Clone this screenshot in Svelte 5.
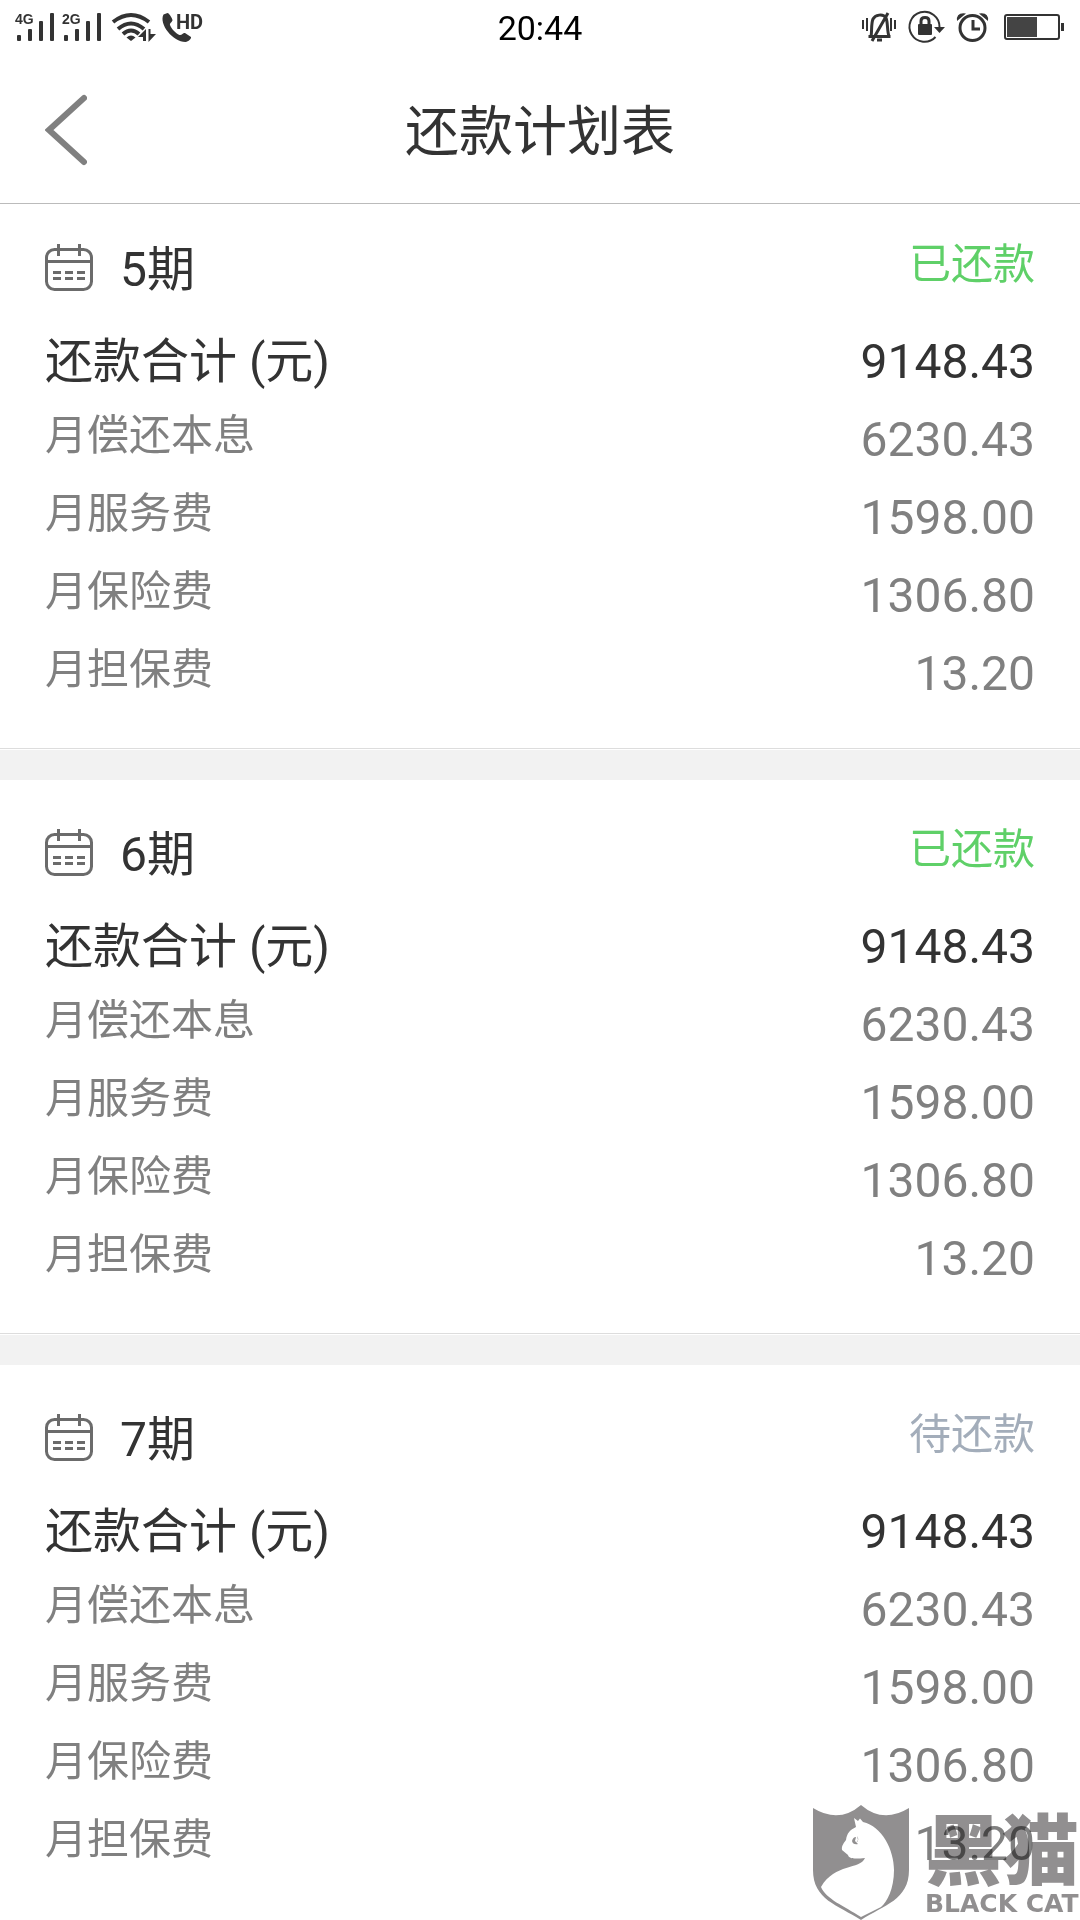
<script>
  const periods = [5, 6, 7].map((n) => ({
    n,
    paid: n < 7,
    total: '9148.43',
    items: [
      ['月偿还本息', '6230.43'],
      ['月服务费', '1598.00'],
      ['月保险费', '1306.80'],
      ['月担保费', '13.20']
    ]
  }));
</script>

<div class="page">
  <div class="status">
    <div class="group left">
      <svg width="220" height="48" viewBox="0 0 220 48" fill="#333" aria-hidden="true">
        <rect x="17" y="35" width="4" height="6" rx="1" />
        <rect x="28" y="29" width="4" height="12" rx="1" />
        <rect x="39" y="21" width="4" height="20" rx="1" />
        <rect x="50" y="13" width="4" height="28" rx="1" />
        <rect x="64" y="35" width="4" height="6" rx="1" />
        <rect x="75" y="29" width="4" height="12" rx="1" />
        <rect x="86" y="21" width="4" height="20" rx="1" />
        <rect x="97" y="13" width="4" height="28" rx="1" />
        <text x="15" y="24" class="net">4G</text>
        <text x="62" y="24" class="net">2G</text>
        <g fill="none" stroke="#333" stroke-width="4">
          <path d="M113 22Q131 8 149 22" />
          <path d="M118 29Q131 18 144 29" />
          <path d="M123 34Q131 27 139 34" />
        </g>
        <path d="M126.500 37.500Q131 33.500 135.500 37.500L131 41z" />
        <path d="M138 37L146 29V41H143V37zM148.500 42V29H150.500V34H156z" />
        <path d="M163.500 14.500L167.500 13C169 13 172 18 172.500 20C172.500 22 169.500 23 170 25C171.500 29 175.500 33 179.500 35C182 35.500 183 32.500 185 33L191 37C191.500 39 188.500 41.500 185.500 42C173 42 158.500 24 163.500 14.500z" />
        <text x="176" y="29" class="hd">HD</text>
      </svg>
    </div>
    <time>20:44</time>
    <div class="group right">
      <svg width="220" height="48" viewBox="860 0 220 48" fill="none" stroke="#333" stroke-width="3" aria-hidden="true">
        <path d="M863 20V29M867 18V31M891 18V31M895 20V29" stroke-width="2" />
        <path d="M868.500 36.500H890.500M871 36C872 33 871 23 873 19C875 15 883 13 886 18C888 22 887 32 889 36M872 41L888 13" />
        <path d="M877 40H882" />
        <path d="M935.500 37A15 15 0 1 1 939.500 27" stroke-width="2" />
        <path d="M934 27H945L939.500 33z" fill="#333" stroke="none" />
        <rect x="918" y="24" width="14" height="11" rx="1" fill="#333" stroke="none" />
        <path d="M921 25V21Q921 17.500 925 17.500Q929 17.500 929 21V25" />
        <circle cx="972.500" cy="28" r="12.500" />
        <path d="M973 20V29H980" />
        <path d="M957 21Q956 12 966 13.500zM988 21Q989 12 979 13.500z" fill="#333" stroke="none" />
        <rect x="1005" y="15" width="54" height="24" rx="2" stroke-width="2" />
        <rect x="1007" y="17" width="30" height="20" fill="#444" stroke="none" />
        <rect x="1061" y="23" width="3" height="8" fill="#333" stroke="none" />
      </svg>
    </div>
  </div>

  <header>
    <button aria-label="返回">
      <svg width="42" height="72" viewBox="0 0 42 72" fill="none" stroke="#808080" stroke-width="6" stroke-linecap="round" aria-hidden="true">
        <path d="M39 4L4 36L39 68" />
      </svg>
    </button>
    <h1>还款计划表</h1>
  </header>

  <main>
    {#each periods as p}
      <section>
        <div class="head">
          <svg width="48" height="48" viewBox="0 0 48 48" fill="none" stroke="#6b6b6b" stroke-width="3" aria-hidden="true">
            <rect x="1.500" y="5.500" width="45" height="40" rx="8" />
            <path d="M1 17.500H47M13.500 0V12M34.500 0V12M8 28.500H16M20 28.500H28M32 28.500H40M8 34.500H16M20 34.500H28M32 34.500H40" />
          </svg>
          <h2>{p.n}期</h2>
          <span class="state" class:paid={p.paid}>{p.paid ? '已还款' : '待还款'}</span>
        </div>
        <dl>
          <div class="total"><dt>还款合计 (元)</dt><dd>{p.total}</dd></div>
          {#each p.items as [label, amount]}
            <div><dt>{label}</dt><dd>{amount}</dd></div>
          {/each}
        </dl>
      </section>
    {/each}
  </main>

  <div class="mark">
    <svg width="98" height="116" viewBox="0 0 98 116" aria-hidden="true">
      <path fill="#918f90" d="M1 4Q27 20 49 1Q71 20 97 4V66C97 96 72 101 49 116C26 101 1 96 1 66z" />
      <path fill="#fff" d="M42 14L46 17L48 14.500L51 18C70 22 82 46 82 66C82 85 75 98 69 103L49 113C32 102 14 95 9 83C23 59 48 66 53 54C43 55 37 55 36 51L30 46Q29 42 34 36C35 29 38 26 44 23z" />
      <path fill="#918f90" d="M40 37Q41 33 44 33L43 37L46 40Q41 41 40 37zM45 32Q48 36 44 39L46 36z" />
    </svg>
    <div class="words">
      <span class="cn">黑猫</span>
      <span class="en">BLACK CAT</span>
    </div>
  </div>
</div>

<style>
  :global(body) {
    margin: 0;
    background: #fff;
  }
  .page {
    position: relative;
    overflow: hidden;
    font-family: Roboto, 'Noto Sans CJK SC', sans-serif;
    color: #333;
  }
  .status {
    display: grid;
    grid-template-columns: 1fr auto 1fr;
    height: 56px;
  }
  .right {
    justify-self: end;
  }
  .net {
    font: bold 14px 'Liberation Sans', sans-serif;
  }
  .hd {
    font: bold 20px Roboto, sans-serif;
  }
  time {
    font-size: 34px;
    line-height: 56px;
    color: #000;
  }
  header {
    display: grid;
    grid-template-columns: 1fr auto 1fr;
    align-items: center;
    height: 147px;
    border-bottom: 1px solid #bbb;
  }
  button {
    justify-self: start;
    display: flex;
    margin-left: 45px;
    padding: 0;
    border: 0;
    background: none;
  }
  h1,
  h2 {
    margin: 0;
    font-weight: 400;
  }
  h1 {
    padding-bottom: 5px;
    font-size: 54px;
  }
  section {
    padding: 24px 45px 35px;
    border-bottom: 1px solid #ddd;
  }
  section:first-child {
    padding-top: 15px;
  }
  section:last-child {
    padding-bottom: 37px;
    border-bottom: 0;
  }
  section + section::before {
    content: '';
    display: block;
    height: 30px;
    margin: -23px -45px 24px;
    background: #f2f2f2;
  }
  .head {
    display: flex;
    align-items: center;
    height: 98px;
    margin-bottom: 6px;
  }
  h2 {
    flex: 1;
    margin-left: 27px;
    padding-bottom: 7px;
    font-size: 48px;
  }
  .state {
    align-self: flex-start;
    font-size: 42px;
    line-height: 92px;
    color: #a3adba;
  }
  .paid {
    color: #5fd068;
  }
  dl {
    margin: 0;
  }
  dl div {
    display: flex;
    justify-content: space-between;
    height: 78px;
    color: #808080;
  }
  dt {
    font-size: 42px;
    line-height: 70px;
  }
  dd {
    margin: 0;
    font-size: 48px;
    line-height: 78px;
  }
  dl .total {
    color: #333;
  }
  .total dt {
    font-size: 48px;
    line-height: 78px;
  }
  .mark {
    position: absolute;
    right: 1px;
    bottom: 0;
    display: flex;
    gap: 15px;
    color: #918f90;
    mix-blend-mode: multiply;
  }
  .words {
    display: flex;
    flex-direction: column;
  }
  .cn {
    font: 900 77px/84px 'Noto Sans CJK SC', sans-serif;
  }
  .en {
    font: bold 25px/32px 'DejaVu Sans', sans-serif;
  }
</style>
